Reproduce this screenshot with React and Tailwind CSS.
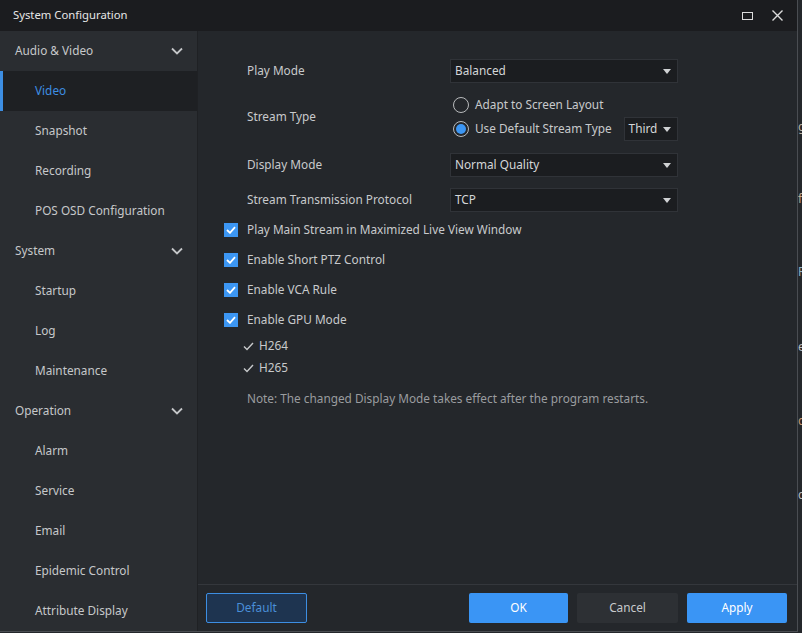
import React, { useState } from "react";

const FONT = { fontFamily: '"Noto Sans", "Liberation Sans", sans-serif' };

const menu = [
  { group: "Audio & Video", items: ["Video", "Snapshot", "Recording", "POS OSD Configuration"] },
  { group: "System", items: ["Startup", "Log", "Maintenance"] },
  { group: "Operation", items: ["Alarm", "Service", "Email", "Epidemic Control", "Attribute Display"] },
];

// bits of the window underneath that peek out past the dialog's right edge
const peek = [
  { y: 118, ch: "g", c: "text-[#b8b0a0]" },
  { y: 190, ch: "f", c: "text-[#c0a890]" },
  { y: 263, ch: "R", c: "text-[#8fb0c0]" },
  { y: 338, ch: "e", c: "text-[#b8babc]" },
  { y: 412, ch: "c", c: "text-[#c89a70]" },
  { y: 486, ch: "c", c: "text-[#b8babc]" },
];

const Chevron = () => (
  <svg width="12" height="8" viewBox="0 0 12 8" className="text-[#c4c6c8]">
    <path d="M1 1.5 L6 6.5 L11 1.5" fill="none" stroke="currentColor" strokeWidth="1.8" />
  </svg>
);

const Caret = () => (
  <svg width="8" height="5" viewBox="0 0 8 5">
    <path d="M0 0 H8 L4 5 Z" fill="#d0d2d4" />
  </svg>
);

const Select = ({ value, className = "w-[228px] h-[24px]" }) => (
  <div className={`${className} flex items-center justify-between pl-[4px] pr-[6px] bg-[#1b1d20] border border-[#303338] text-[#d4d6d8]`}>
    <span>{value}</span>
    <Caret />
  </div>
);

const Check = ({ label }) => (
  <div className="h-[30px] flex items-center gap-[9px]">
    <div className="w-[14px] h-[14px] bg-[#3c96f3] flex items-center justify-center">
      <svg width="10" height="8" viewBox="0 0 10 8">
        <path d="M1 4 L4 6.8 L9 1.2" fill="none" stroke="#fff" strokeWidth="1.8" />
      </svg>
    </div>
    <span>{label}</span>
  </div>
);

const Radio = ({ checked, label }) => (
  <div className="flex items-center gap-[6px]">
    <div className="w-[16px] h-[16px] rounded-full border border-[#b8babc] flex items-center justify-center">
      {checked && <div className="w-[10px] h-[10px] rounded-full bg-[#3c96f3]" />}
    </div>
    <span>{label}</span>
  </div>
);

const Row = ({ label, children, className = "" }) => (
  <div className={`flex items-center ${className}`}>
    <div className="w-[203px]">{label}</div>
    {children}
  </div>
);

export default function App() {
  const [active, setActive] = useState("Video");

  return (
    <div className="w-[802px] h-[633px] flex bg-[#24272b] overflow-hidden" style={FONT}>
      <div className="w-[798px] h-[632px] flex flex-col border-r border-b border-[#4a4d52] bg-[#24272b]">
        {/* title bar */}
        <div className="h-[31px] shrink-0 flex items-center justify-between bg-[#1b1c1f] pl-[13px] pr-[14px] text-[11.3px] text-[#e6e6e6]">
          <span>System Configuration</span>
          <div className="flex items-center gap-[19px]">
            <div className="w-[11px] h-[8px] border border-[#dcdcdc]" />
            <svg width="11" height="11" viewBox="0 0 11 11">
              <path d="M0.5 0.5 L10.5 10.5 M10.5 0.5 L0.5 10.5" stroke="#dcdcdc" strokeWidth="1.4" />
            </svg>
          </div>
        </div>

        <div className="flex flex-1 min-h-0">
          {/* sidebar */}
          <div className="w-[198px] bg-[#2a2d31] border-r border-[#1f2124] text-[11.8px] text-[#c6c8ca] overflow-hidden">
            {menu.map((g) => (
              <div key={g.group}>
                <div className="h-[40px] flex items-center justify-between pl-[15px] pr-[14px]">
                  <span>{g.group}</span>
                  <Chevron />
                </div>
                {g.items.map((it) => (
                  <div
                    key={it}
                    onClick={() => setActive(it)}
                    className={
                      active === it
                        ? "h-[40px] flex items-center cursor-pointer bg-[#1e2023] text-[#3d8ee2] border-l-[3px] border-[#3d8ee2] pl-[32px]"
                        : "h-[40px] flex items-center cursor-pointer pl-[35px]"
                    }
                  >
                    {it}
                  </div>
                ))}
              </div>
            ))}
          </div>

          {/* content */}
          <div className="flex-1 flex flex-col">
            <div className="flex-1 pl-[49px] pt-[28px] text-[11.8px] text-[#c8cacc]">
              <Row label="Play Mode">
                <Select value="Balanced" />
              </Row>
              <Row label="Stream Type" className="mt-[10px]">
                <div className="flex flex-col pl-[3px]">
                  <div className="h-[24px] flex items-center">
                    <Radio label="Adapt to Screen Layout" />
                  </div>
                  <div className="h-[24px] flex items-center gap-[12px]">
                    <Radio checked label="Use Default Stream Type" />
                    <Select value="Third" className="w-[54px] h-[24px]" />
                  </div>
                </div>
              </Row>
              <Row label="Display Mode" className="mt-[12px]">
                <Select value="Normal Quality" />
              </Row>
              <Row label="Stream Transmission Protocol" className="mt-[11px]">
                <Select value="TCP" />
              </Row>
              <div className="-ml-[23px] mt-[3px]">
                <Check label="Play Main Stream in Maximized Live View Window" />
                <Check label="Enable Short PTZ Control" />
                <Check label="Enable VCA Rule" />
                <Check label="Enable GPU Mode" />
              </div>
              <div className="-ml-[4px]">
                {["H264", "H265"].map((c) => (
                  <div key={c} className="h-[22px] flex items-center gap-[5px]">
                    <svg width="11" height="9" viewBox="0 0 11 9">
                      <path d="M1 4.5 L4 7.5 L10 1" fill="none" stroke="#c8cacc" strokeWidth="1.4" />
                    </svg>
                    <span>{c}</span>
                  </div>
                ))}
              </div>
              <div className="mt-[11px] h-[16px] leading-[16px] text-[#9a9c9f]">
                Note: The changed Display Mode takes effect after the program restarts.
              </div>
            </div>

            {/* footer */}
            <div className="h-[47px] shrink-0 border-t border-[#34373c] flex items-center pl-[8px] pr-[10px] text-[11.8px]">
              <button className="w-[101px] h-[30px] rounded-[2px] border border-[#3d8ee2] bg-[#1e3450] text-[#4a8fd8]">
                Default
              </button>
              <div className="flex-1" />
              <div className="flex gap-[9px]">
                <button className="w-[99px] h-[30px] rounded-[2px] bg-[#3a95f5] text-white">OK</button>
                <button className="w-[101px] h-[30px] rounded-[2px] bg-[#2d3034] text-[#c8cacc]">Cancel</button>
                <button className="w-[100px] h-[30px] rounded-[2px] bg-[#3a95f5] text-white">Apply</button>
              </div>
            </div>
          </div>
        </div>
      </div>
      <div className="flex-1 relative bg-[#24272b] overflow-hidden text-[12px]">
        {peek.map((p) => (
          <span key={p.y} className={`absolute left-0 ${p.c}`} style={{ top: p.y }}>
            {p.ch}
          </span>
        ))}
      </div>
    </div>
  );
}
